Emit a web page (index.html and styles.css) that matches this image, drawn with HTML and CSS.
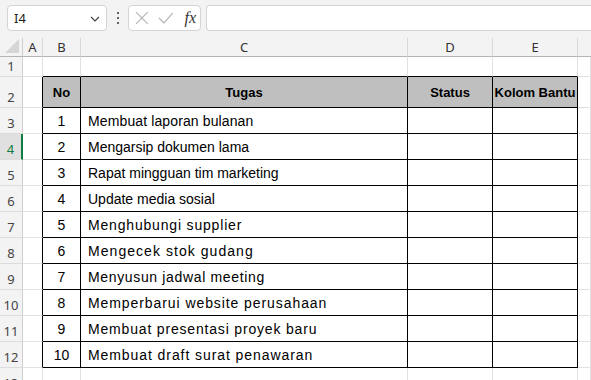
FILE: index.html
```html
<!DOCTYPE html>
<html>
<head>
<meta charset="utf-8">
<link rel="stylesheet" href="styles.css">
</head>
<body>
<div class="app">
  <div class="toolbar">
    <div class="namebox">
      <span class="namebox-text">I4</span>
      <svg class="chev" width="10" height="6" viewBox="0 0 10 6"><path d="M1 1 L5 5 L9 1" fill="none" stroke="#444" stroke-width="1.2"/></svg>
    </div>
    <div class="dots"><span></span><span></span><span></span></div>
    <div class="fxbox">
      <svg width="14" height="14" viewBox="0 0 14 14"><path d="M1 1 L13 13 M13 1 L1 13" stroke="#b4b4b4" stroke-width="1.2" fill="none"/></svg>
      <svg width="16" height="12" viewBox="0 0 16 12"><path d="M1 6 L6 11 L15 1" stroke="#b4b4b4" stroke-width="1.2" fill="none"/></svg>
      <span class="fx">fx</span>
    </div>
    <div class="formula"></div>
  </div>
  <div class="sheet">
    <div class="corner"><div class="tri"></div></div>
    <div class="ch">A</div><div class="ch">B</div><div class="ch">C</div><div class="ch">D</div><div class="ch">E</div><div class="ch last"></div>

    <div class="rh">1</div>
    <div class="c"></div><div class="c bb"></div><div class="c bb"></div><div class="c bb"></div><div class="c bb"></div><div class="c"></div>

    <div class="rh">2</div>
    <div class="c br"></div><div class="t th">No</div><div class="t th">Tugas</div><div class="t th">Status</div><div class="t th">Kolom Bantu</div><div class="c"></div>

    <div class="rh">3</div>
    <div class="c br"></div><div class="t num">1</div><div class="t txt ls-a">Membuat laporan bulanan</div><div class="t"></div><div class="t"></div><div class="c"></div>

    <div class="rh sel">4</div>
    <div class="c br"></div><div class="t num">2</div><div class="t txt">Mengarsip dokumen lama</div><div class="t"></div><div class="t"></div><div class="c"></div>

    <div class="rh">5</div>
    <div class="c br"></div><div class="t num">3</div><div class="t txt">Rapat mingguan tim marketing</div><div class="t"></div><div class="t"></div><div class="c"></div>

    <div class="rh">6</div>
    <div class="c br"></div><div class="t num">4</div><div class="t txt">Update media sosial</div><div class="t"></div><div class="t"></div><div class="c"></div>

    <div class="rh">7</div>
    <div class="c br"></div><div class="t num">5</div><div class="t txt ls-c">Menghubungi supplier</div><div class="t"></div><div class="t"></div><div class="c"></div>

    <div class="rh">8</div>
    <div class="c br"></div><div class="t num">6</div><div class="t txt ls-e">Mengecek stok gudang</div><div class="t"></div><div class="t"></div><div class="c"></div>

    <div class="rh">9</div>
    <div class="c br"></div><div class="t num">7</div><div class="t txt ls-b">Menyusun jadwal meeting</div><div class="t"></div><div class="t"></div><div class="c"></div>

    <div class="rh">10</div>
    <div class="c br"></div><div class="t num">8</div><div class="t txt ls-d">Memperbarui website perusahaan</div><div class="t"></div><div class="t"></div><div class="c"></div>

    <div class="rh">11</div>
    <div class="c br"></div><div class="t num">9</div><div class="t txt ls-c">Membuat presentasi proyek baru</div><div class="t"></div><div class="t"></div><div class="c"></div>

    <div class="rh">12</div>
    <div class="c br"></div><div class="t num">10</div><div class="t txt ls-d">Membuat draft surat penawaran</div><div class="t"></div><div class="t"></div><div class="c"></div>

    <div class="rh">13</div>
    <div class="c"></div><div class="c"></div><div class="c"></div><div class="c"></div><div class="c"></div><div class="c"></div>
  </div>
</div>
</body>
</html>
```

FILE: styles.css
```css
* { box-sizing: border-box; }
html, body { margin: 0; padding: 0; }
body {
  width: 591px;
  height: 380px;
  overflow: hidden;
  background: #f3f3f3;
  font-family: "Liberation Sans", Arial, sans-serif;
}
.app { display: flex; flex-direction: column; height: 380px; }
.toolbar {
  height: 38px;
  display: flex;
  align-items: flex-start;
  padding: 5px 0 0 7px;
  background: #f3f3f3;
  flex-shrink: 0;
}
.namebox {
  width: 100px;
  height: 26px;
  background: #fff;
  border: 1px solid #d4d4d4;
  border-radius: 4px;
  display: flex;
  align-items: center;
  justify-content: space-between;
  padding: 0 6px 0 6px;
  font-family: "Noto Sans", sans-serif;
  font-size: 13px;
  color: #222;
}
.chev { margin-top: 1px; }
.dots {
  width: 21px;
  height: 26px;
  display: flex;
  flex-direction: column;
  align-items: center;
  justify-content: center;
  gap: 3px;
}
.dots span { width: 2px; height: 2px; background: #333; border-radius: 1px; }
.fxbox {
  width: 73px;
  height: 26px;
  background: #fff;
  border: 1px solid #d4d4d4;
  border-radius: 4px;
  display: flex;
  align-items: center;
  padding: 0 4px 0 6px;
  gap: 9px;
}
.fx {
  font-family: "Liberation Serif", "DejaVu Serif", serif;
  font-style: italic;
  font-size: 16px;
  color: #333;
  margin-left: 2px;
}
.formula {
  flex: 1;
  margin-left: 5px;
  height: 26px;
  background: #fff;
  border: 1px solid #d4d4d4;
  border-right: none;
  border-radius: 4px 0 0 4px;
}
.sheet {
  display: grid;
  grid-template-columns: 23px 20px 38px 327px 85px 85px 1fr;
  grid-template-rows: 19px 20px 31px repeat(11, 26px);
  background: #fff;
}
.corner {
  background: #f3f3f3;
  border-right: 1px solid #d0d0d0;
  border-bottom: 1px solid #b4b4b4;
  position: relative;
}
.tri {
  position: absolute;
  right: 3px;
  bottom: 3px;
  width: 0; height: 0;
  border-left: 14px solid transparent;
  border-bottom: 14px solid #d6d6d6;
}
.ch {
  background: #f3f3f3;
  border-right: 1px solid #d8d8d8;
  border-bottom: 1px solid #b4b4b4;
  display: flex;
  align-items: center;
  justify-content: center;
  font-family: "Noto Sans", sans-serif;
  font-size: 13px;
  color: #333;
}
.ch.last { border-right: none; }
.rh {
  background: #f3f3f3;
  border-right: 1px solid #cfcfcf;
  border-bottom: 1px solid #dcdcdc;
  display: flex;
  align-items: flex-end;
  justify-content: center;
  padding-bottom: 1px;
  font-family: "Noto Sans", sans-serif;
  font-size: 13px;
  line-height: 17px;
  color: #444;
}
.rh.sel {
  background: #e0e0e0;
  border-right: 2px solid #107c41;
  color: #107c41;
}
.c {
  border-right: 1px solid #e1e1e1;
  border-bottom: 1px solid #e1e1e1;
}
.c.bb { border-bottom-color: #000; }
.c.br { border-right-color: #000; }
.t {
  border-right: 1px solid #000;
  border-bottom: 1px solid #000;
  display: flex;
  align-items: center;
  font-size: 14px;
  color: #000;
}
.th {
  background: #bfbfbf;
  justify-content: center;
  font-weight: bold;
  font-size: 13px;
}
.num { justify-content: center; }
.txt { padding-left: 7px; white-space: nowrap; }
.ls-a { letter-spacing: 0.12px; }
.ls-b { letter-spacing: 0.65px; }
.ls-c { letter-spacing: 0.82px; }
.ls-d { letter-spacing: 0.92px; }
.ls-e { letter-spacing: 1.05px; }
```
